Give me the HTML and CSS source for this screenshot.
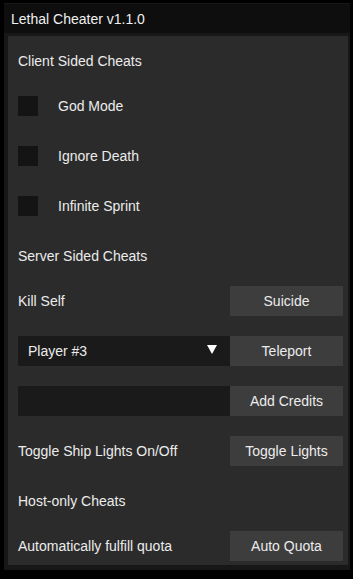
FILE: index.html
```html
<!DOCTYPE html>
<html>
<head>
<meta charset="utf-8">
<link rel="stylesheet" href="styles.css">
</head>
<body>
<div class="window">
  <div class="titlebar">Lethal Cheater v1.1.0</div>
  <div class="panel">
    <div class="heading">Client Sided Cheats</div>
    <div class="row toggle"><span class="check"></span><span>God Mode</span></div>
    <div class="row toggle"><span class="check"></span><span>Ignore Death</span></div>
    <div class="row toggle"><span class="check"></span><span>Infinite Sprint</span></div>
    <div class="heading">Server Sided Cheats</div>
    <div class="row"><span class="label">Kill Self</span><span class="btn">Suicide</span></div>
    <div class="row">
      <div class="select"><span>Player #3</span><svg class="arrow" width="10" height="9" viewBox="0 0 10 9"><polygon points="0,0 10,0 5,9" fill="#fff"/></svg></div>
      <span class="btn">Teleport</span>
    </div>
    <div class="row"><div class="input"></div><span class="btn">Add Credits</span></div>
    <div class="row"><span class="label">Toggle Ship Lights On/Off</span><span class="btn">Toggle Lights</span></div>
    <div class="heading">Host-only Cheats</div>
    <div class="row"><span class="label">Automatically fulfill quota</span><span class="btn">Auto Quota</span></div>
  </div>
</div>
</body>
</html>
```

FILE: styles.css
```css
html, body {
  margin: 0;
  padding: 0;
  background: #000;
}
body {
  font-family: "Liberation Sans", Arial, sans-serif;
  font-size: 14px;
  color: #ececec;
  height: 579px;
  overflow: hidden;
}
.window {
  margin: 3px 0 0 4px;
  width: 346px;
  height: 567px;
  box-sizing: border-box;
  background: #171717;
  padding: 1px 0 5px 0;
  display: flex;
  flex-direction: column;
}
.titlebar {
  height: 29px;
  background: #0e0e0e;
  line-height: 30px;
  padding-left: 7px;
  font-size: 14px;
  color: #f0f0f0;
  margin-bottom: 3px;
}
.panel {
  flex: 1;
  margin: 0 2px 0 4px;
  background: #2b2b2b;
  padding: 10px 5px 0 10px;
  display: flex;
  flex-direction: column;
  gap: 20px;
}
.heading {
  height: 30px;
  line-height: 31px;
  margin-bottom: -5px;
}
.row {
  height: 30px;
  display: flex;
  align-items: center;
  line-height: 31px;
}
.toggle {
  gap: 20px;
}
.check {
  width: 20px;
  height: 20px;
  background: #141414;
}
.label {
  flex: 1;
}
.btn {
  width: 113px;
  height: 30px;
  line-height: 31px;
  text-align: center;
  background: #3d3d3d;
  flex: none;
}
.select, .input {
  flex: 1;
  height: 30px;
  background: #1a1a1a;
  display: flex;
  align-items: center;
  justify-content: space-between;
  padding: 0 13px 0 10px;
}
.arrow {
  display: block;
  margin-top: -4px;
}
```
